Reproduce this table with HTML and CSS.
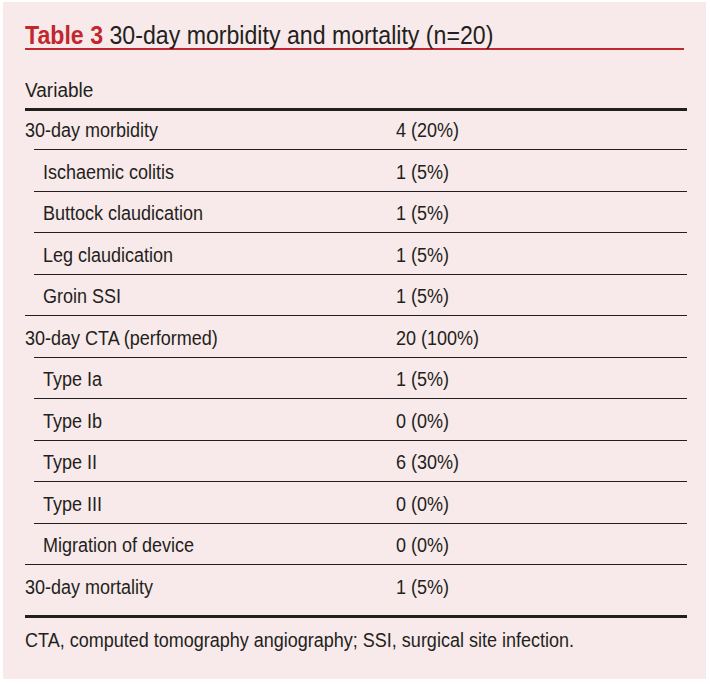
FILE: index.html
```html
<!DOCTYPE html>
<html lang="en">
<head>
<meta charset="utf-8">
<title>Table 3</title>
<link rel="stylesheet" href="styles.css">
</head>
<body>
<div class="panel">
  <h1 class="title"><span class="t"><span class="label">Table 3</span> 30-day morbidity and mortality (n=20)</span></h1>
  <div class="head"><span class="t">Variable</span></div>
  <div class="rows">
    <div class="row main first"><span class="t name">30-day morbidity</span><span class="t val">4 (20%)</span></div>
    <div class="row sub"><span class="t name">Ischaemic colitis</span><span class="t val">1 (5%)</span></div>
    <div class="row sub"><span class="t name">Buttock claudication</span><span class="t val">1 (5%)</span></div>
    <div class="row sub"><span class="t name">Leg claudication</span><span class="t val">1 (5%)</span></div>
    <div class="row sub"><span class="t name">Groin SSI</span><span class="t val">1 (5%)</span></div>
    <div class="row main"><span class="t name">30-day CTA (performed)</span><span class="t val">20 (100%)</span></div>
    <div class="row sub"><span class="t name">Type Ia</span><span class="t val">1 (5%)</span></div>
    <div class="row sub"><span class="t name">Type Ib</span><span class="t val">0 (0%)</span></div>
    <div class="row sub"><span class="t name">Type II</span><span class="t val">6 (30%)</span></div>
    <div class="row sub"><span class="t name">Type III</span><span class="t val">0 (0%)</span></div>
    <div class="row sub"><span class="t name">Migration of device</span><span class="t val">0 (0%)</span></div>
    <div class="row main"><span class="t name">30-day mortality</span><span class="t val">1 (5%)</span></div>
  </div>
  <p class="note"><span class="t">CTA, computed tomography angiography; SSI, surgical site infection.</span></p>
</div>
</body>
</html>
```

FILE: styles.css
```css
html, body {
  margin: 0;
  padding: 0;
  background: #ffffff;
}

body {
  font-family: "Liberation Sans", Arial, sans-serif;
  color: #231f20;
}

.panel {
  box-sizing: border-box;
  margin: 2px 4px 0 3px;
  height: 677px;
  background: #f8e9ea;
  padding: 20px 19px 0 22px;
}

/* condensed look: narrow the glyphs horizontally */
.t {
  display: inline-block;
  white-space: nowrap;
  transform: scaleX(0.9);
  transform-origin: 0 50%;
}

.title {
  margin: 0;
  font-size: 26px;
  font-weight: normal;
  line-height: 26px;
  border-bottom: 2px solid #c1272d;
  margin-right: 3px;
}

.title .t {
  transform: scaleX(0.89);
}

.label {
  color: #c1272d;
  font-weight: bold;
}

.head {
  font-size: 20px;
  line-height: 22px;
  padding: 29px 0 6.6px;
  border-bottom: 3px solid #231f20;
}

.head .t {
  transform: scaleX(0.95);
}

.rows {
  border-bottom: 3px solid #231f20;
  padding-bottom: 9.5px;
}

.row {
  display: grid;
  grid-template-columns: 371px 1fr;
  justify-items: start;
  font-size: 20px;
  line-height: 22px;
  padding: 10.5px 0 8px;
  border-top: 1px solid #231f20;
}

.row.first {
  border-top: none;
  padding-top: 8.5px;
}

.row.sub {
  margin-left: 9px;
  grid-template-columns: 362px 1fr;
}

.row.sub .name {
  margin-left: 9px;
}

.note {
  margin: 0;
  font-size: 20px;
  line-height: 22px;
  padding-top: 11px;
}
```
